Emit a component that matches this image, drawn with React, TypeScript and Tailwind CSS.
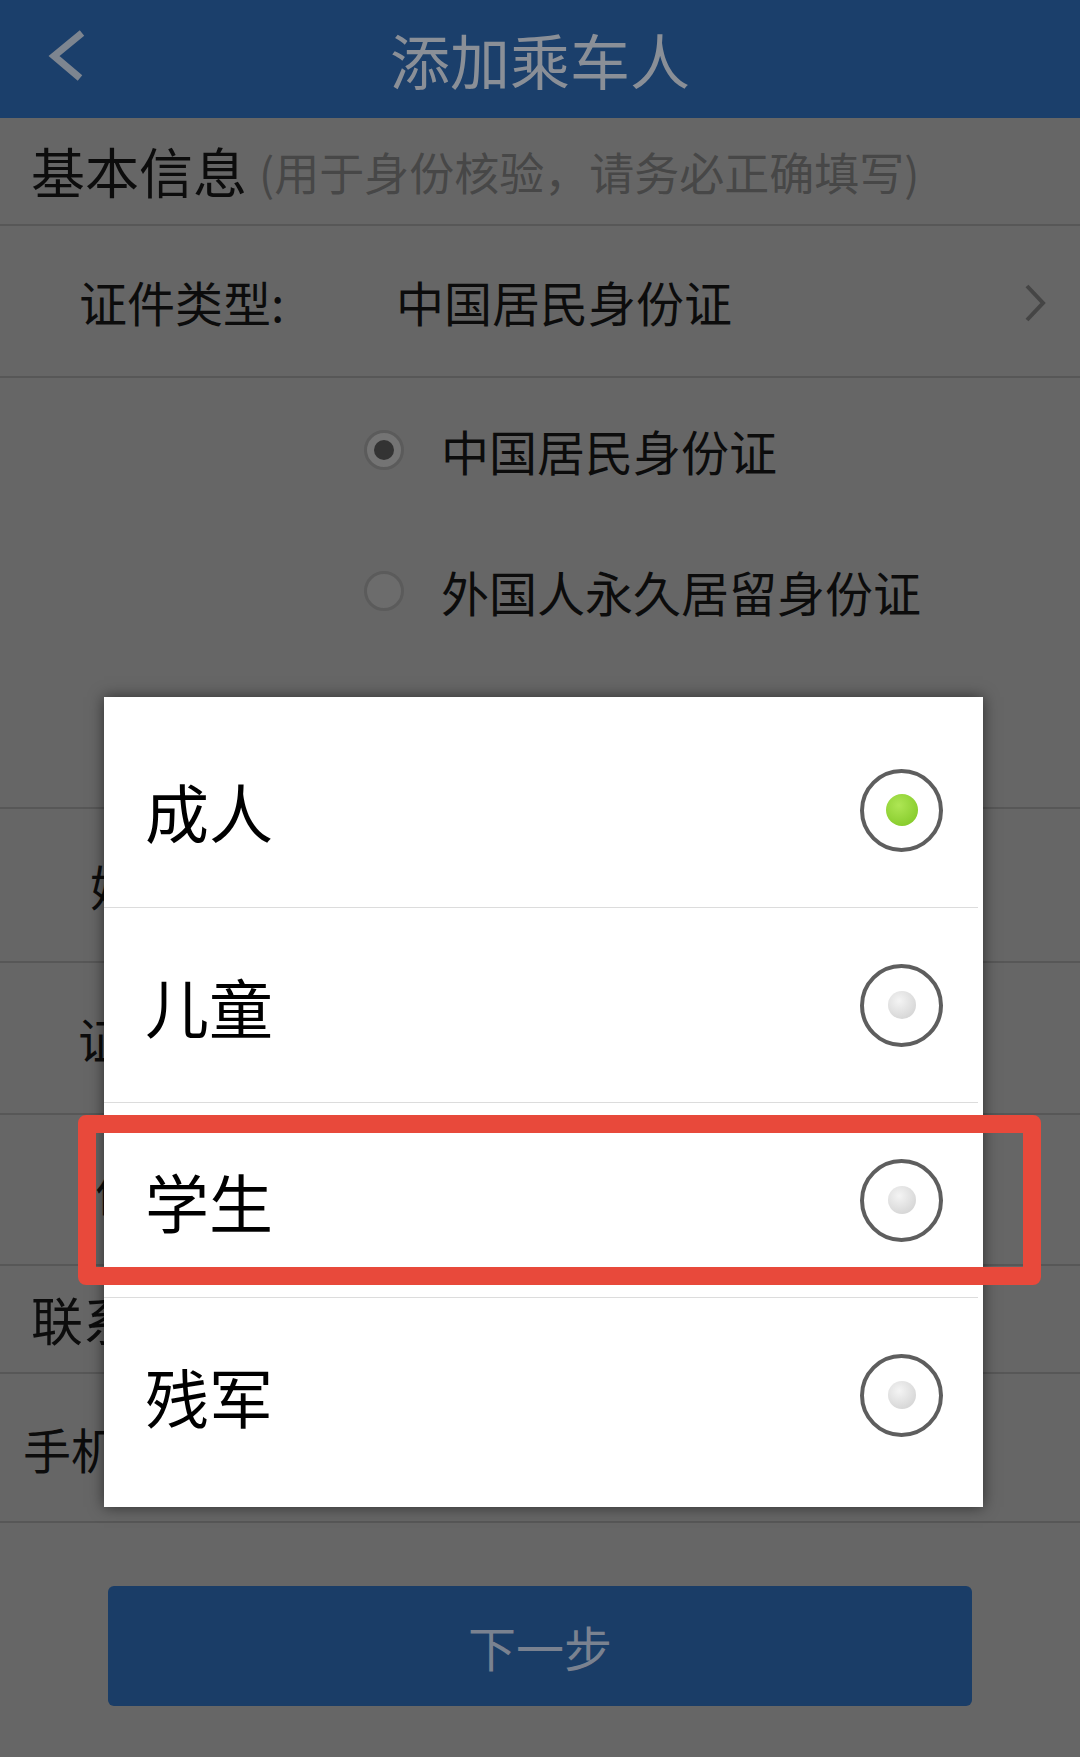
import React from 'react';

const PASSENGER_TYPES = [
  { id: 'adult', label: '成人', checked: true },
  { id: 'child', label: '儿童', checked: false },
  { id: 'student', label: '学生', checked: false },
  { id: 'soldier', label: '残军', checked: false },
];

function DimRadio({ checked }: { checked: boolean }) {
  return checked ? (
    <span className="flex h-[40px] w-[40px] items-center justify-center rounded-full border-[3px] border-[#5b5b5b] bg-[#747474]">
      <span className="h-[20px] w-[20px] rounded-full bg-[#333]" />
    </span>
  ) : (
    <span className="h-[40px] w-[40px] rounded-full border-[3px] border-[#5b5b5b] bg-[#6c6c6c]" />
  );
}

function DialogRadio({ checked }: { checked: boolean }) {
  return (
    <span className="flex h-[83px] w-[83px] items-center justify-center rounded-full border-[4px] border-[#5e5e5e] bg-white">
      {checked ? (
        <span className="h-[32px] w-[32px] rounded-full bg-[radial-gradient(circle_at_40%_35%,#aee654,#7cc421)]" />
      ) : (
        <span className="h-[28px] w-[28px] rounded-full bg-[radial-gradient(circle_at_40%_35%,#f4f4f4,#cdcdcd)]" />
      )}
    </span>
  );
}

export default function App() {
  return (
    <div className="relative h-[1757px] w-[1080px] overflow-hidden bg-[#666666] font-['Noto_Sans_CJK_SC','Noto_Sans',sans-serif] text-[#0c0c0c]">
      {/* Header */}
      <header className="relative flex h-[118px] items-center justify-center bg-[#1b3f6b]">
        <svg className="absolute left-[46px] top-[28px]" width="44" height="56" viewBox="0 0 44 56" fill="none">
          <path d="M36 5 L8 28 L34 50" stroke="#7d8590" strokeWidth="7" strokeLinejoin="miter" />
        </svg>
        <h1 className="text-[60px] leading-none text-[#8a8f97]">添加乘车人</h1>
      </header>

      {/* Basic info section title */}
      <div className="flex h-[108px] items-center border-b-2 border-[#575757] pl-[31px]">
        <span className="text-[54px] leading-none">基本信息</span>
        <span className="ml-[12px] text-[45px] leading-none text-[#474747]">(用于身份核验，请务必正确填写)</span>
      </div>

      {/* Document type */}
      <div className="relative flex h-[152px] items-center border-b-2 border-[#575757] text-[48px] leading-none">
        <span className="w-[396px] pl-[79px]">证件类型:</span>
        <span>中国居民身份证</span>
        <svg className="absolute left-[1020px] top-[56px]" width="30" height="40" viewBox="0 0 30 40" fill="none">
          <path d="M7 4 L23 21 L7 38" stroke="#454545" strokeWidth="4" />
        </svg>
      </div>

      {/* Document choices */}
      <div className="flex h-[431px] flex-col gap-[71px] border-b-2 border-[#575757] pt-[37px] text-[48px] leading-none">
        <div className="flex h-[70px] items-center pl-[364px]">
          <DimRadio checked />
          <span className="ml-[37px]">中国居民身份证</span>
        </div>
        <div className="flex h-[70px] items-center pl-[364px]">
          <DimRadio checked={false} />
          <span className="ml-[37px]">外国人永久居留身份证</span>
        </div>
      </div>

      {/* Form rows behind the dialog */}
      <div className="flex h-[154px] items-center border-b-2 border-[#575757] pl-[90px] text-[48px] leading-none">姓名:</div>
      <div className="flex h-[152px] items-center border-b-2 border-[#575757] pl-[78px] text-[48px] leading-none">证件号码:</div>
      <div className="flex h-[151px] items-center border-b-2 border-[#575757] pl-[95px] text-[48px] leading-none">优惠类型:</div>
      <div className="flex h-[108px] items-center border-b-2 border-[#575757] pl-[31px] text-[52px] leading-none">联系方式</div>
      <div className="flex h-[149px] items-center border-b-2 border-[#575757] pl-[23px] text-[48px] leading-none">手机号码:</div>

      {/* Next button */}
      <div className="mx-[108px] mt-[63px] flex h-[120px] items-center justify-center rounded-[6px] bg-[#1a3d67]">
        <span className="text-[48px] leading-none text-[#7a8290]">下一步</span>
      </div>

      {/* Passenger type dialog */}
      <div className="absolute left-[104px] top-[697px] w-[879px] bg-white pb-[15px] pt-[16px] shadow-[0_0_14px_rgba(0,0,0,0.55)]">
        {PASSENGER_TYPES.map((type, index) => (
          <div key={type.id}>
            {index > 0 && <div className="mr-[5px] h-px bg-[#dcdcdc]" />}
            <div className="flex h-[194px] items-center justify-between pl-[41px] pr-[40px]">
              <span className="text-[64px] leading-none text-black">{type.label}</span>
              <DialogRadio checked={type.checked} />
            </div>
          </div>
        ))}
      </div>

      {/* Highlight annotation */}
      <div className="absolute left-[78px] top-[1115px] h-[170px] w-[963px] rounded-[8px] border-[18px] border-[#e8493b]" />
    </div>
  );
}
